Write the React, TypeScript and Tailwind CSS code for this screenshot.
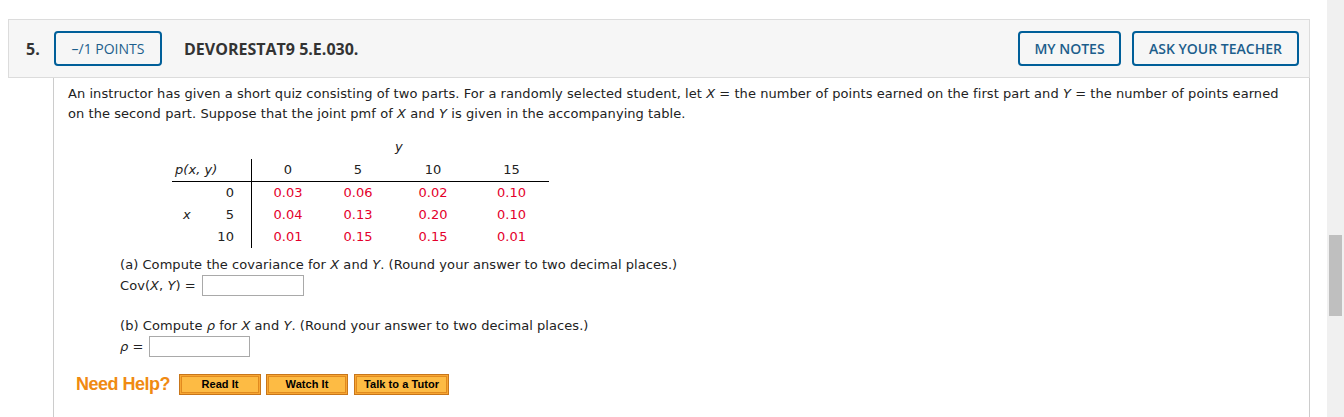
import React from 'react';

const verdana = "font-['DejaVu_Sans',Verdana,sans-serif]";

const colW = ['w-[72px]', 'w-[68px]', 'w-[82px]', 'w-[75px]'];

const rows = [
  { x: '0', v: ['0.03', '0.06', '0.02', '0.10'] },
  { x: '5', v: ['0.04', '0.13', '0.20', '0.10'] },
  { x: '10', v: ['0.01', '0.15', '0.15', '0.01'] },
];

function HelpButton({ label, w }: { label: string; w: string }) {
  return (
    <div className={`${w} h-[21px] border border-[#c8761a] bg-[#f7a733] p-[1px]`}>
      <div className="flex h-full items-center justify-center border border-[#e18a1f] bg-[#fdbb44] font-['Liberation_Sans',Arial,sans-serif] text-[11px] font-bold text-black">
        {label}
      </div>
    </div>
  );
}

export default function App() {
  return (
    <div className="flex h-[417px] w-[1344px] overflow-hidden bg-white">
      <div className="w-[1327px] pl-[8px] pr-[17px] pt-[19px]">
        {/* header bar */}
        <div className="flex h-[59px] items-center border border-[#dcdcdc] bg-[#f6f6f6] font-['Open_Sans',sans-serif]">
          <span className="ml-[17px] w-[28px] text-[16px] font-bold text-[#333]">5.</span>
          <div className="flex h-[35px] w-[108px] items-center justify-center rounded-[4px] border-2 border-[#005f99] text-[14px] text-[#1d5e8c]">
            –/1 POINTS
          </div>
          <span className="ml-[22px] text-[16px] font-bold text-[#333]">DEVORESTAT9 5.E.030.</span>
          <div className="ml-auto mr-[10px] flex gap-[11px]">
            <div className="flex h-[35px] w-[103px] items-center justify-center rounded-[4px] border-2 border-[#005f99] text-[14px] font-semibold text-[#1d5e8c]">
              MY NOTES
            </div>
            <div className="flex h-[35px] w-[167px] items-center justify-center rounded-[4px] border-2 border-[#005f99] text-[14px] font-semibold text-[#1d5e8c]">
              ASK YOUR TEACHER
            </div>
          </div>
        </div>

        {/* body */}
        <div className={`ml-[45px] h-[340px] border-l border-r border-[#cccccc] pl-[14px] pt-[6px] ${verdana} text-[13px] tracking-[0.06px] text-[#222]`}>
          <p className="max-w-[1215px] leading-[20px]">
            An instructor has given a short quiz consisting of two parts. For a randomly selected student, let <i>X</i> = the number of
            points earned on the first part and <i>Y</i> = the number of points earned on the second part. Suppose that the joint pmf of{' '}
            <i>X</i> and <i>Y</i> is given in the accompanying table.
          </p>

          <div className="ml-[104px] mt-[16px] w-[377px] text-[13px] leading-[22px]">
            <div className="flex h-[19px] items-start leading-[14px]">
              <span className="ml-[223px] italic">y</span>
            </div>
            <div className="flex border-b border-black">
              <span className="w-[79px] pl-[3px] italic">p(x, y)</span>
              <div className="flex border-l border-black">
                {['0', '5', '10', '15'].map((c, j) => (
                  <span key={c} className={`${colW[j]} text-center`}>{c}</span>
                ))}
              </div>
            </div>
            {rows.map((r, i) => (
              <div key={r.x} className="flex">
                <span className="w-[15px] pl-[11px] italic">{i === 1 ? 'x' : ''}</span>
                <span className="w-[64px] pr-[17px] text-right">{r.x}</span>
                <div className="flex border-l border-black">
                  {r.v.map((v, j) => (
                    <span key={j} className={`${colW[j]} text-center text-[#e4002b]`}>{v}</span>
                  ))}
                </div>
              </div>
            ))}
          </div>

          <div className="ml-[52px] mt-[7px] leading-[20px]">
            <p>(a) Compute the covariance for <i>X</i> and <i>Y</i>. (Round your answer to two decimal places.)</p>
            <div className="flex items-center gap-[6px]">
              <span>Cov(<i>X</i>, <i>Y</i>) =</span>
              <div className="h-[21px] w-[102px] border border-[#a9a9a9] bg-white" />
            </div>
            <p className="mt-[20px]">(b) Compute <i>ρ</i> for <i>X</i> and <i>Y</i>. (Round your answer to two decimal places.)</p>
            <div className="flex items-center gap-[6px]">
              <span><i>ρ</i> =</span>
              <div className="h-[21px] w-[101px] border border-[#a9a9a9] bg-white" />
            </div>
          </div>

          <div className="ml-[8px] mt-[14px] flex items-center">
            <span className="font-['Liberation_Sans',Arial,sans-serif] text-[18px] font-bold tracking-[-0.5px] text-[#f08a12]">
              Need Help?
            </span>
            <div className="ml-[9px] flex gap-[5px]">
              <HelpButton label="Read It" w="w-[82px]" />
              <HelpButton label="Watch It" w="w-[82px]" />
              <div className="ml-[1px]">
                <HelpButton label="Talk to a Tutor" w="w-[95px]" />
              </div>
            </div>
          </div>
        </div>
      </div>

      {/* scrollbar */}
      <div className="w-[17px] bg-[#f0f0f0] px-[2px] pt-[235px]">
        <div className="h-[81px] bg-[#bfbfbf]" />
      </div>
    </div>
  );
}
